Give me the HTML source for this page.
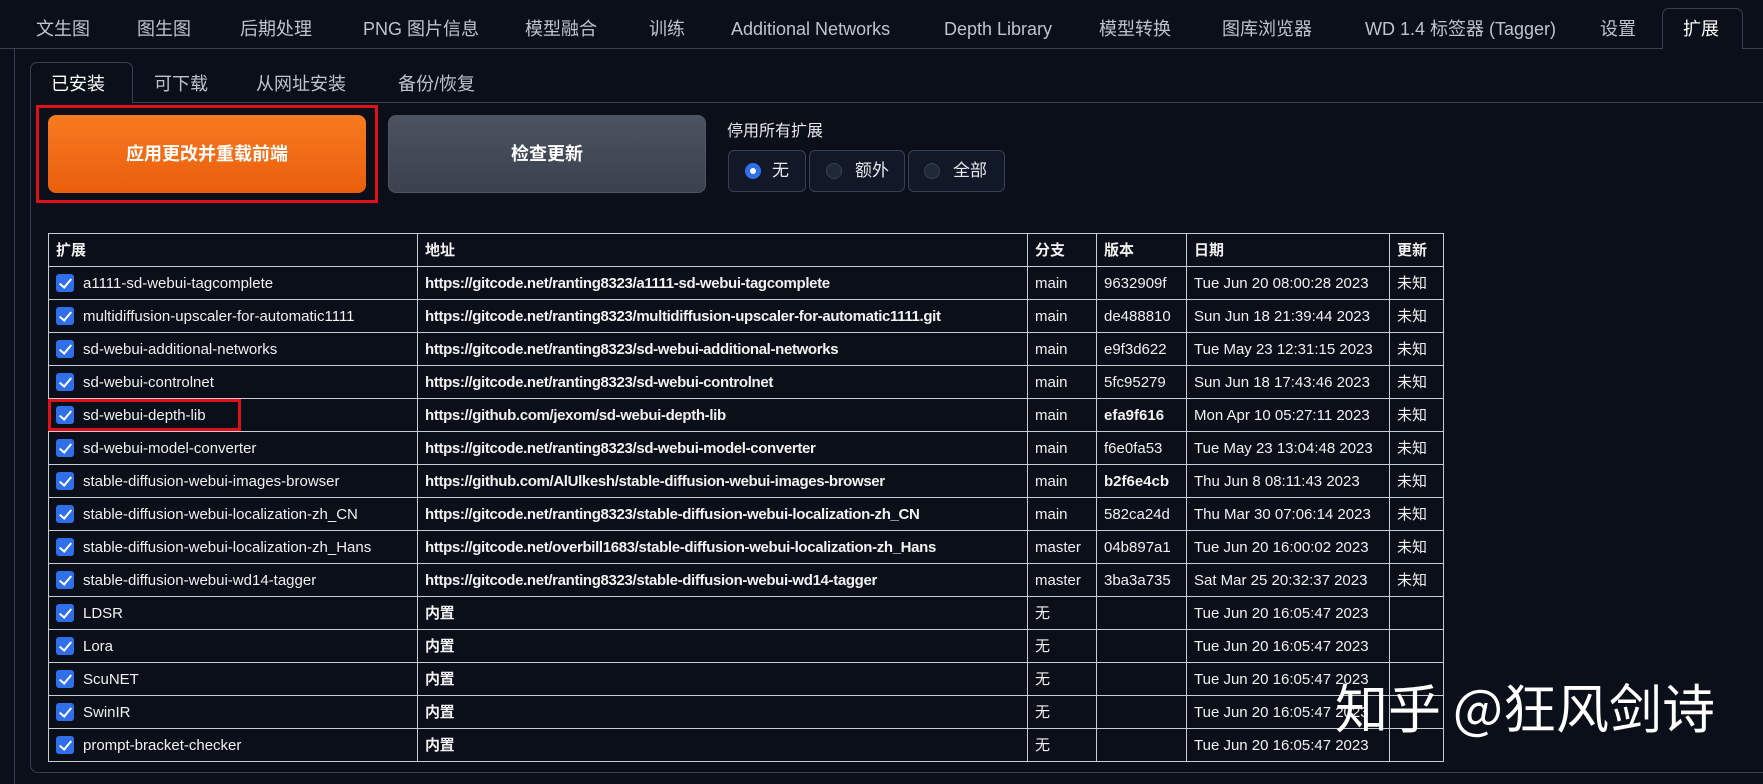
<!DOCTYPE html>
<html><head><meta charset="utf-8"><style>
*{box-sizing:border-box;margin:0;padding:0}
body{width:1763px;height:784px;background:#0b0f19;color:#e5e7eb;font-family:"Liberation Sans","Noto Sans CJK SC",sans-serif;position:relative;overflow:hidden}
.t{position:absolute;top:17px;font-size:18px;line-height:24px;height:24px;color:#bfc3cb;white-space:nowrap}
.line{position:absolute;background:#374151}
.abs{position:absolute}
table{position:absolute;left:48px;top:233px;border-collapse:collapse;table-layout:fixed;width:1395px}
td,th{border:1px solid #c9ccd1;height:33px;line-height:31px;font-size:15px;padding:0 7px;white-space:nowrap;overflow:hidden;text-align:left;color:#f1f1f1;vertical-align:middle}
th{font-weight:bold}
td:nth-child(2){font-weight:bold;letter-spacing:-0.35px}
.cb{display:inline-block;width:18px;height:18px;background:#2f6fea;border-radius:3px;vertical-align:-4px;margin-right:9px;position:relative}
.cb:after{content:"";position:absolute;left:6px;top:2px;width:5px;height:10px;border:solid #fff;border-width:0 2.5px 2.5px 0;transform:rotate(40deg)}
</style></head><body>
<div class="t" style="left:36px">文生图</div>
<div class="t" style="left:137px">图生图</div>
<div class="t" style="left:240px">后期处理</div>
<div class="t" style="left:363px">PNG 图片信息</div>
<div class="t" style="left:525px">模型融合</div>
<div class="t" style="left:649px">训练</div>
<div class="t" style="left:731px">Additional Networks</div>
<div class="t" style="left:944px">Depth Library</div>
<div class="t" style="left:1099px">模型转换</div>
<div class="t" style="left:1222px">图库浏览器</div>
<div class="t" style="left:1365px">WD 1.4 标签器 (Tagger)</div>
<div class="t" style="left:1600px">设置</div>
<div class="line" style="left:0;top:48px;width:1763px;height:1px"></div>
<div class="abs" style="left:1662px;top:8px;width:81px;height:41px;border:1px solid #374151;border-bottom:none;border-radius:7px 7px 0 0;background:#0b0f19"></div>
<div class="t" style="left:1683px;color:#fff">扩展</div>
<div class="line" style="left:14px;top:48px;width:1px;height:736px"></div>
<div class="abs" style="left:30px;top:102px;width:1740px;height:671px;border:1px solid #374151;border-top:none;border-radius:0 0 0 8px"></div>
<div class="line" style="left:30px;top:102px;width:1733px;height:1px"></div>
<div class="abs" style="left:30px;top:62px;width:103px;height:41px;border:1px solid #374151;border-bottom:none;border-radius:7px 7px 0 0;background:#0b0f19"></div>
<div class="t" style="left:51px;top:72px;color:#fff">已安装</div>
<div class="t" style="left:154px;top:72px">可下载</div>
<div class="t" style="left:256px;top:72px">从网址安装</div>
<div class="t" style="left:398px;top:72px">备份/恢复</div>
<div class="abs" style="left:36px;top:105px;width:342px;height:98px;border:3px solid #e0101a"></div>
<div class="abs" style="left:48px;top:115px;width:318px;height:78px;border-radius:8px;background:linear-gradient(180deg,#f77a20,#ea5f0c);color:#fff;font-weight:bold;font-size:18px;text-align:center;line-height:78px">应用更改并重载前端</div>
<div class="abs" style="left:388px;top:115px;width:318px;height:78px;border-radius:8px;background:linear-gradient(180deg,#4b5361,#3b414d);border:1px solid #4b5563;color:#fff;font-weight:bold;font-size:18px;text-align:center;line-height:76px">检查更新</div>
<div class="abs" style="left:727px;top:117px;font-size:16px;color:#e5e7eb">停用所有扩展</div>
<div class="abs" style="left:728px;top:150px;width:78px;height:42px;border:1px solid #374151;border-radius:6px;background:#111827"><span class="abs" style="left:16px;top:12px;width:16px;height:16px;border-radius:50%;background:#2f6fea"><span class="abs" style="left:5px;top:5px;width:6px;height:6px;border-radius:50%;background:#fff"></span></span><span class="abs" style="left:43px;top:8px;font-size:17px;line-height:24px">无</span></div>
<div class="abs" style="left:809px;top:150px;width:96px;height:42px;border:1px solid #374151;border-radius:6px;background:#111827"><span class="abs" style="left:16px;top:12px;width:16px;height:16px;border-radius:50%;background:#1f2937;border:1px solid #374151"></span><span class="abs" style="left:45px;top:8px;font-size:17px;line-height:24px">额外</span></div>
<div class="abs" style="left:908px;top:150px;width:97px;height:42px;border:1px solid #374151;border-radius:6px;background:#111827"><span class="abs" style="left:15px;top:12px;width:16px;height:16px;border-radius:50%;background:#1f2937;border:1px solid #374151"></span><span class="abs" style="left:44px;top:8px;font-size:17px;line-height:24px">全部</span></div>
<table>
<colgroup><col style="width:369px"><col style="width:610px"><col style="width:69px"><col style="width:90px"><col style="width:203px"><col style="width:54px"></colgroup>
<tr><th>扩展</th><th>地址</th><th>分支</th><th>版本</th><th>日期</th><th>更新</th></tr>
<tr><td><span class="cb"></span>a1111-sd-webui-tagcomplete</td><td>https://gitcode.net/ranting8323/a1111-sd-webui-tagcomplete</td><td>main</td><td>9632909f</td><td>Tue Jun 20 08:00:28 2023</td><td>未知</td></tr>
<tr><td><span class="cb"></span>multidiffusion-upscaler-for-automatic1111</td><td>https://gitcode.net/ranting8323/multidiffusion-upscaler-for-automatic1111.git</td><td>main</td><td>de488810</td><td>Sun Jun 18 21:39:44 2023</td><td>未知</td></tr>
<tr><td><span class="cb"></span>sd-webui-additional-networks</td><td>https://gitcode.net/ranting8323/sd-webui-additional-networks</td><td>main</td><td>e9f3d622</td><td>Tue May 23 12:31:15 2023</td><td>未知</td></tr>
<tr><td><span class="cb"></span>sd-webui-controlnet</td><td>https://gitcode.net/ranting8323/sd-webui-controlnet</td><td>main</td><td>5fc95279</td><td>Sun Jun 18 17:43:46 2023</td><td>未知</td></tr>
<tr><td><span class="cb"></span>sd-webui-depth-lib</td><td>https://github.com/jexom/sd-webui-depth-lib</td><td>main</td><td style="font-weight:bold">efa9f616</td><td>Mon Apr 10 05:27:11 2023</td><td>未知</td></tr>
<tr><td><span class="cb"></span>sd-webui-model-converter</td><td>https://gitcode.net/ranting8323/sd-webui-model-converter</td><td>main</td><td>f6e0fa53</td><td>Tue May 23 13:04:48 2023</td><td>未知</td></tr>
<tr><td><span class="cb"></span>stable-diffusion-webui-images-browser</td><td>https://github.com/AlUlkesh/stable-diffusion-webui-images-browser</td><td>main</td><td style="font-weight:bold">b2f6e4cb</td><td>Thu Jun 8 08:11:43 2023</td><td>未知</td></tr>
<tr><td><span class="cb"></span>stable-diffusion-webui-localization-zh_CN</td><td>https://gitcode.net/ranting8323/stable-diffusion-webui-localization-zh_CN</td><td>main</td><td>582ca24d</td><td>Thu Mar 30 07:06:14 2023</td><td>未知</td></tr>
<tr><td><span class="cb"></span>stable-diffusion-webui-localization-zh_Hans</td><td>https://gitcode.net/overbill1683/stable-diffusion-webui-localization-zh_Hans</td><td>master</td><td>04b897a1</td><td>Tue Jun 20 16:00:02 2023</td><td>未知</td></tr>
<tr><td><span class="cb"></span>stable-diffusion-webui-wd14-tagger</td><td>https://gitcode.net/ranting8323/stable-diffusion-webui-wd14-tagger</td><td>master</td><td>3ba3a735</td><td>Sat Mar 25 20:32:37 2023</td><td>未知</td></tr>
<tr><td><span class="cb"></span>LDSR</td><td>内置</td><td>无</td><td></td><td>Tue Jun 20 16:05:47 2023</td><td></td></tr>
<tr><td><span class="cb"></span>Lora</td><td>内置</td><td>无</td><td></td><td>Tue Jun 20 16:05:47 2023</td><td></td></tr>
<tr><td><span class="cb"></span>ScuNET</td><td>内置</td><td>无</td><td></td><td>Tue Jun 20 16:05:47 2023</td><td></td></tr>
<tr><td><span class="cb"></span>SwinIR</td><td>内置</td><td>无</td><td></td><td>Tue Jun 20 16:05:47 2023</td><td></td></tr>
<tr><td><span class="cb"></span>prompt-bracket-checker</td><td>内置</td><td>无</td><td></td><td>Tue Jun 20 16:05:47 2023</td><td></td></tr>
</table>
<div class="abs" style="left:48px;top:399px;width:193px;height:32px;border:3px solid #e0101a"></div>
<div class="abs" style="left:1335px;top:675px;font-size:53px;color:#fff;white-space:nowrap;font-family:'Noto Sans CJK SC',sans-serif;line-height:62px">知乎 @狂风剑诗</div>
</body></html>
